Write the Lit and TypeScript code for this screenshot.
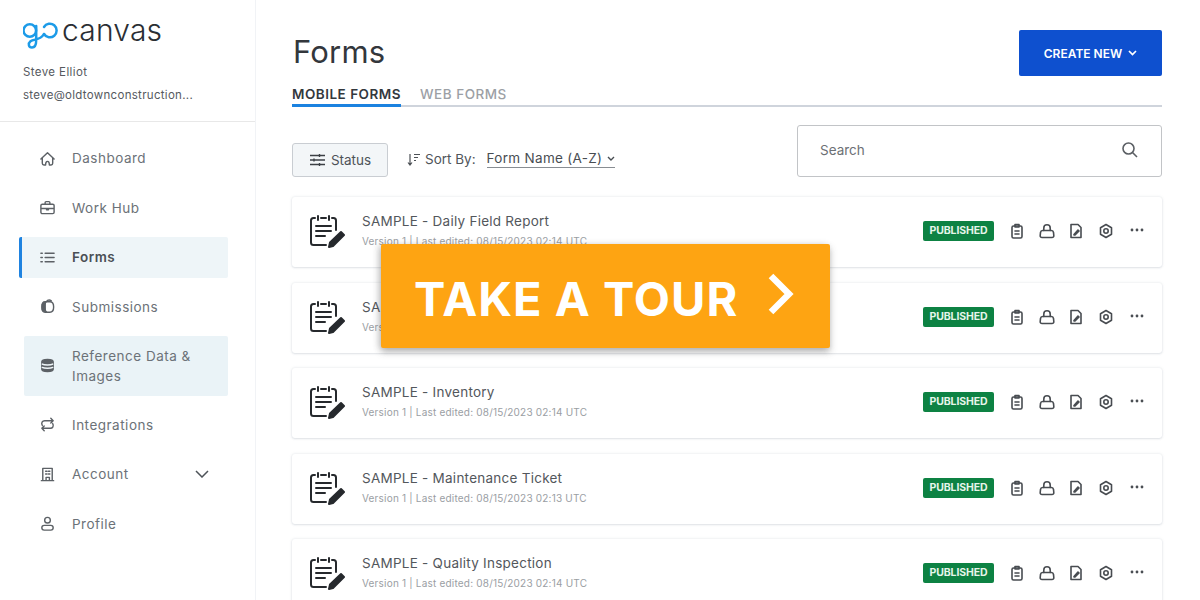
import { LitElement, html, css, svg } from "lit";
import { customElement } from "lit/decorators.js";

const nav: { label: string; icon: any; cls?: string; chevron?: boolean }[] = [
  { label: "Dashboard", icon: svg`<path d="M2 9.500 9 3l7 6.500M3.500 8v6c0 1 .6 1.800 1.700 1.800H7c0-2 .6-3.800 2-3.800s2 1.800 2 3.800h1.800c1.100 0 1.700-.8 1.700-1.800V8"/>` },
  { label: "Work Hub", icon: svg`<path d="M6.500 5.500V3.800c0-.6.400-1 1-1h3c.6 0 1 .4 1 1v1.700M3.500 5.500h11c.8 0 1.500.7 1.500 1.500v7c0 .8-.7 1.500-1.500 1.500h-11c-.8 0-1.500-.7-1.500-1.500V7c0-.8.7-1.500 1.500-1.500ZM2 10h14M8 10v1.500h2V10"/>` },
  { label: "Forms", cls: "active", icon: svg`<path d="M6.500 4.500H16M6.500 9H16M6.500 13.500H16M2 4.500h1.500M2 9h1.500M2 13.500h1.500"/>` },
  { label: "Submissions", icon: svg`<path d="M6.500 4h5c2.500 0 4 2.200 4 5.500s-1.500 5.500-4 5.500h-5c-2.500 0-3.500-2.200-3.500-5.500S4 4 6.500 4Z"/><path d="M8 3.500C5 6 5.500 13 8 15M9 2.500c1.500-.5 3-.3 4 .5" /><path d="M3.500 7v5l3 2.500V4.500Z" fill="currentColor"/>` },
  { label: "Reference Data & Images", cls: "tall", icon: svg`<path d="M3 5c0-1.500 2.700-2.500 6-2.500s6 1 6 2.500v8c0 1.500-2.700 2.500-6 2.500S3 14.500 3 13Z" fill="currentColor"/><path d="M3.500 7.500c2 1.300 9 1.300 11 0M3.500 11c2 1.300 9 1.300 11 0" stroke="#eef5f8"/>` },
  { label: "Integrations", icon: svg`<path d="M3.500 10C2 7.500 3.500 5 6 5h9M12.500 2.500 15 5l-2.500 2.500M14.500 8c1.500 2.500 0 5-2.500 5H3M5.500 15.500 3 13l2.500-2.500"/>` },
  { label: "Account", chevron: true, icon: svg`<path d="M4 2.500h10v13H4ZM2.500 15.500h13M7 5.500h1.500M10 5.500h1.500M7 8.500h1.500M10 8.500h1.500M7.500 15.500V12h3.500v3.500"/>` },
  { label: "Profile", icon: svg`<circle cx="9" cy="5.500" r="3"/><rect x="3" y="11" width="12" height="5" rx="2.500"/>` },
];

const rows = [
  ["SAMPLE - Daily Field Report", "02:14"],
  ["SAMPLE - Asset Inspection", "02:14"],
  ["SAMPLE - Inventory", "02:14"],
  ["SAMPLE - Maintenance Ticket", "02:13"],
  ["SAMPLE - Quality Inspection", "02:14"],
];

@customElement("app-root")
export class AppRoot extends LitElement {
  static styles = css`
    :host {
      display: block;
      width: 1200px;
      height: 600px;
      overflow: hidden;
      position: relative;
      background: #fff;
      font-family: "Inter", "Lato", sans-serif;
      color: #555b61;
    }
    .page { display: flex; height: 600px; }
    .side { width: 255px; flex: none; border-right: 1px solid #f1f3f6; }
    .head { height: 122px; box-sizing: border-box; padding: 18px 0 0 23px; border-bottom: 1px solid #e8e8e8; }
    .logo { display: flex; align-items: flex-start; height: 32px; }
    .logo svg { display: block; width: 39px; height: 34px; flex: none; }
    .logo span { font: 300 30px/25px "Inter", sans-serif; letter-spacing: .2px; color: #2a2e33; }
    .name { font-size: 11.500px; line-height: 15px; margin-top: 15px; color: #55595e; letter-spacing: .4px; }
    .mail { font-size: 11.500px; line-height: 15px; margin-top: 8px; color: #55595e; letter-spacing: .3px; }
    nav { display: flex; flex-direction: column; gap: 8.500px; padding: 15.800px 0 0 19px; }
    .item {
      width: 209px; height: 41px; box-sizing: border-box; display: flex; align-items: center;
      padding: 0 19px 0 17px; gap: 16px; font-size: 13.500px; line-height: 20px; color: #6c7278; letter-spacing: .5px;
      border-left: 3px solid transparent; border-radius: 2px;
    }
    .item svg.ic { width: 17px; height: 17px; flex: none; fill: none; stroke: currentColor; stroke-width: 1.500; stroke-linecap: round; stroke-linejoin: round; color: #5c6166; }
    .item.active { background: #eef5f8; border-left-color: #1f83e0; color: #4a4f55; font-weight: 600; }
    .item.tall { height: 60px; background: #eaf3f7; margin-left: 5px; width: 204px; border-left: 0; padding-left: 15px; }
    .item .txt { max-width: 132px; }
    .item .chev { margin-left: auto; width: 14px; height: 8px; fill: none; stroke: #4e5358; stroke-width: 1.500; }
    main { flex: none; width: 870px; margin-left: 36px; }
    .top { display: flex; justify-content: space-between; padding-top: 30px; height: 84px; box-sizing: border-box; }
    h1 { margin: 0; padding-left: 1px; font: 400 31px/43px "Inter", sans-serif; color: #33373c; letter-spacing: .2px; }
    .create {
      width: 143px; height: 46px; background: #0e50cf; border-radius: 2px; color: #fff; box-sizing: border-box;
      display: flex; align-items: center; justify-content: center; gap: 6px; font-size: 12px; font-weight: 600; letter-spacing: 0;
    }
    .create svg { width: 9px; height: 6px; fill: none; stroke: #fff; stroke-width: 1.700; }
    .tabs { display: flex; gap: 19px; border-bottom: 2px solid #cfd4dc; height: 21px; font-size: 13.500px; line-height: 20px; letter-spacing: .5px; }
    .tab { height: 23px; box-sizing: border-box; color: #9ca0a5; font-weight: 500; }
    .tab.on { color: #33383d; border-bottom: 3px solid #1b82e0; font-weight: 600; }
    .tools { display: flex; align-items: flex-start; height: 72px; padding-top: 18px; box-sizing: border-box; margin-bottom: 18px; }
    .status {
      margin-top: 18px; width: 96px; height: 34px; box-sizing: border-box; background: #f3f6f8; border: 1.500px solid #c9cdd2; border-radius: 3px;
      display: flex; align-items: center; justify-content: center; gap: 5px; font-size: 13.500px; color: #4e5358;
    }
    .status svg { width: 17px; height: 14px; fill: none; stroke: #3c4045; stroke-width: 1.400; }
    .sort { margin-top: 17px; margin-left: 18px; height: 34px; display: flex; align-items: center; font-size: 13.500px; color: #50555a; }
    .sort svg.s { width: 15px; height: 15px; fill: none; stroke: #4d5156; stroke-width: 1.200; margin-right: 4px; }
    .sel { margin-left: 11px; border-bottom: 1.500px solid #888d92; line-height: 17px; display: flex; align-items: center; gap: 5px; color: #484d52; letter-spacing: .3px; }
    .sel svg { width: 8px; height: 5px; fill: none; stroke: #484d52; stroke-width: 1.400; }
    .search {
      margin-left: auto; width: 365px; height: 52px; box-sizing: border-box; border: 1.500px solid #c2c4c7; border-radius: 3px;
      display: flex; align-items: center; justify-content: space-between; padding: 0 22px 3px; font-size: 13.500px; color: #6c7075;
    }
    .search svg { width: 18px; height: 18px; fill: none; stroke: #5b5f64; stroke-width: 1.600; }
    .list { display: flex; flex-direction: column; gap: 15.600px; }
    .row {
      height: 70px; box-sizing: border-box; display: flex; align-items: center; padding: 0 17px; flex: none;
      border-radius: 3px; background: #fff; box-shadow: 0 0 3px rgba(120,130,150,.22), 0 1px 2px rgba(120,130,150,.16);
    }
    .form { width: 36px; height: 36px; flex: none; fill: none; stroke: #26292d; stroke-width: 2; stroke-linecap: round; stroke-linejoin: round; }
    .info { margin-left: 17px; margin-top: -4px; }
    .title { font-size: 13.500px; line-height: 18px; color: #53575c; letter-spacing: .25px; }
    .meta { font-size: 10px; line-height: 13px; margin-top: 5px; color: #9a9ea3; letter-spacing: .2px; }
    .acts { margin-left: auto; display: flex; align-items: center; margin-top: -2px; }
    .pub { width: 71px; height: 20px; background: #0d8243; border-radius: 2px; color: #e6f5ea; font-size: 10.500px; font-weight: 700; line-height: 20px; text-align: center; letter-spacing: -.1px; margin-right: 15px; }
    .acts svg { width: 16px; height: 16px; fill: none; stroke: #484c51; stroke-width: 1.600; stroke-linejoin: round; stroke-linecap: round; margin-right: 13.500px; flex: none; }
    .acts svg.dots { width: 14px; margin: 0 1px 0 3px; stroke: none; fill: #4a4e53; }
    .tour {
      position: absolute; left: 381px; top: 244px; width: 449px; height: 104px; padding: 6px 0 0 33px; background: #fea412; border-radius: 2px;
      box-shadow: 0 4px 7px rgba(60,60,60,.35), -3px 0 6px rgba(60,60,60,.15); display: flex; align-items: center; color: #fff; box-sizing: border-box;
      font: 700 47px/56px "Inter", sans-serif; letter-spacing: 1px;
    }
    .tour svg { width: 26px; height: 42px; margin-left: 30px; fill: none; stroke: #fff; stroke-width: 6.500; margin-top: -10px; flex: none; }
  `;

  render() {
    return html`
      <div class="page">
        <aside class="side">
          <div class="head">
            <div class="logo">
              <svg viewBox="0 0 39 34" fill="none" stroke="#1c9be8" stroke-width="2.500" stroke-linecap="round" role="img" aria-label="go">
                <circle cx="6.800" cy="12.500" r="6.300" />
                <path d="M13.200 8v14c0 4-1.300 7.500-4.200 7.500-3.500 0-4.200-4-1.500-6.200 3.500-2.800 9.500-.3 13.500-7.300" />
                <path d="M21 16a6.800 6.800 0 1 0 0-7" />
              </svg>
              <span>canvas</span>
            </div>
            <div class="name">Steve Elliot</div>
            <div class="mail">steve@oldtownconstruction...</div>
          </div>
          <nav>
            ${nav.map(
              (n) => html`<div class="item ${n.cls ?? ""}">
                <svg class="ic" viewBox="0 0 18 18">${n.icon}</svg>
                <span class="txt">${n.label}</span>
                ${n.chevron ? html`<svg class="chev" viewBox="0 0 14 8"><path d="M1 1l6 6 6-6" /></svg>` : ""}
              </div>`
            )}
          </nav>
        </aside>
        <main>
          <div class="top">
            <h1>Forms</h1>
            <div class="create">CREATE NEW <svg viewBox="0 0 9 6"><path d="M1 1l3.500 3.500L8 1" /></svg></div>
          </div>
          <div class="tabs"><div class="tab on">MOBILE FORMS</div><div class="tab">WEB FORMS</div></div>
          <div class="tools">
            <div class="status">
              <svg viewBox="0 0 17 14"><path d="M1 2.500h15M1 7h15M1 11.500h15M10.500 1v3M5 5.500v3M10.500 10v3" /></svg>
              Status
            </div>
            <div class="sort">
              <svg class="s" viewBox="0 0 15 15"><path d="M4 2v11M2 10.500 4 13l2-2.500M8 2.500h6M8 5.500h4M8 8.500h2" /></svg>
              Sort By:
              <span class="sel">Form Name (A-Z) <svg viewBox="0 0 8 5"><path d="M1 1l3 3 3-3" /></svg></span>
            </div>
            <div class="search">
              Search
              <svg viewBox="0 0 18 18"><circle cx="7.500" cy="7.500" r="5.500" /><path d="M11.500 11.500 16 16" /></svg>
            </div>
          </div>
          <div class="list">
            ${rows.map(
              ([t, time]) => html`<div class="row">
                <svg class="form" viewBox="0 0 36 36">
                  <path d="M6 4H4.500C3 4 2 5 2 6.500v22C2 30 3 31 4.500 31H17M12 4h5M23 4h1.500C26 4 27 5 27 6.500V16" />
                  <path d="M9 2v4M20 2v4M7 12h15M7 17h15M7 22h9" />
                  <path d="M20 33l1-4.500 11-10.500 3 3-11 11Z" fill="#26292d" />
                </svg>
                <div class="info">
                  <div class="title">${t}</div>
                  <div class="meta">Version 1 | Last edited: 08/15/2023 ${time} UTC</div>
                </div>
                <div class="acts">
                  <div class="pub">PUBLISHED</div>
                  <svg viewBox="0 0 16 16"><rect x="3" y="3" width="10" height="12" rx="1.500" /><path d="M6 1.500h4V4H6ZM6 8h4M6 11h4" /></svg>
                  <svg viewBox="0 0 16 16"><path d="M3.500 7.500h9c1 0 1.800.8 2 2l.3 3c.1 1.200-.7 2-1.800 2H3c-1.100 0-1.900-.8-1.800-2l.3-3c.2-1.200 1-2 2-2Z" /><path d="M4.800 7.500V5a3.200 3.200 0 0 1 6.400 0v2.500" /></svg>
                  <svg viewBox="0 0 16 16"><path d="M3 1.500h7l3 3v10H3Z" /><path d="M6 11.500l4-4.500 1 1-4 4H6Z" fill="#484c51" /></svg>
                  <svg viewBox="0 0 16 16"><path d="M8 1.500l5.500 3.200v6.600L8 14.500l-5.500-3.200V4.700Z" /><circle cx="8" cy="8" r="2.200" /></svg>
                  <svg class="dots" viewBox="0 0 14 16"><circle cx="2" cy="7" r="1.400" /><circle cx="7" cy="7" r="1.400" /><circle cx="12" cy="7" r="1.400" /></svg>
                </div>
              </div>`
            )}
          </div>
        </main>
      </div>
      <div class="tour">
        TAKE A TOUR
        <svg viewBox="0 0 26 42"><path d="M3 3l18 18L3 39" /></svg>
      </div>
    `;
  }
}
